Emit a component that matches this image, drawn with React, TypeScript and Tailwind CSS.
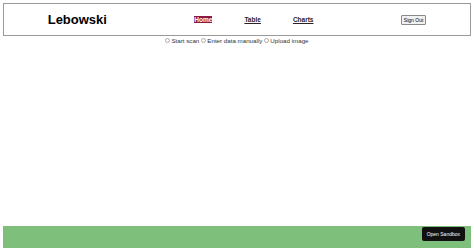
import React, { useState } from 'react';

const NAV = ['Home', 'Table', 'Charts'];
const OPTIONS = ['Start scan', 'Enter data manually', 'Upload image'];

const App: React.FC = () => {
  const [active, setActive] = useState('Home');
  const [mode, setMode] = useState('');

  return (
    <div className="flex flex-col h-[248px] w-full bg-white px-[3px] pt-[3px] font-['Liberation_Sans',Arial,sans-serif] overflow-hidden">
      {/* Header */}
      <header className="h-[33px] border border-[#9a9a9a] flex items-center justify-around">
        <h1 className="text-[13px] font-bold text-black leading-none">Lebowski</h1>
        <nav className="flex items-center gap-[32px]">
          {NAV.map((item) => (
            <a
              key={item}
              href="#"
              onClick={(e) => {
                e.preventDefault();
                setActive(item);
              }}
              className={`text-[6.5px] font-bold leading-[7.5px] underline ${
                active === item ? 'bg-[#8c1a3f] text-white' : 'text-[#2b2226]'
              }`}
            >
              {item}
            </a>
          ))}
        </nav>
        <button className="text-[5px] leading-none px-[2px] py-[2px] h-[10px] border border-[#8a8a8a] rounded-[1px] bg-[#f0f0f0] text-black">
          Sign Out
        </button>
      </header>

      {/* Input mode */}
      <div className="flex justify-center items-center h-[10px] gap-[2px] text-[6.2px] text-[#333]">
        {OPTIONS.map((opt) => (
          <label key={opt} className="flex items-center gap-[1px] cursor-pointer" onClick={() => setMode(opt)}>
            <span
              className={`w-[5px] h-[5px] rounded-full border-[0.5px] border-[#aaaaaa] ${mode === opt ? 'bg-[#1a73e8]' : 'bg-white'}`}
            />
            <span>{opt}</span>
          </label>
        ))}
      </div>

      <div className="flex-1" />

      {/* Footer */}
      <footer className="h-[22px] bg-[#7fbf7c] flex justify-end items-start pt-[1px] pr-[6px]">
        <button className="h-[14px] px-[5px] rounded-[2px] bg-[#111111] text-white text-[5px] leading-none">
          Open Sandbox
        </button>
      </footer>
    </div>
  );
};

export default App;
